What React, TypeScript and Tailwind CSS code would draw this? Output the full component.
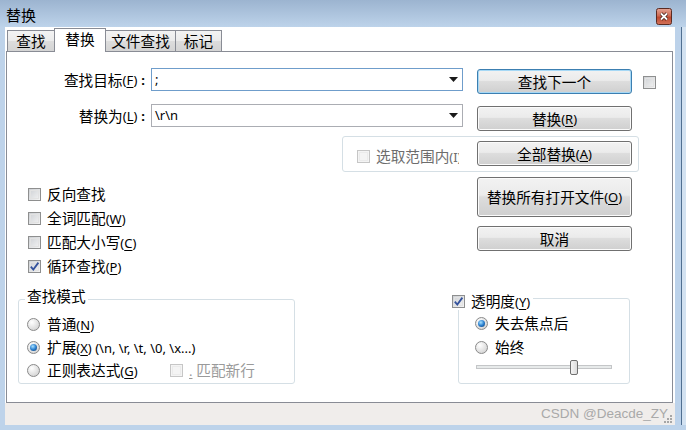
import React from 'react';

const Mn = ({ k }: { k: string }) => (
  <span className="text-[13px]">
    (<span className="underline underline-offset-[2px]">{k}</span>)
  </span>
);

const Check = ({ checked = false, disabled = false }: { checked?: boolean; disabled?: boolean }) => (
  <span
    className={`relative flex h-[13px] w-[13px] shrink-0 items-center justify-center border ${
      disabled
        ? 'border-[#c6c6c6] bg-[#f4f4f4]'
        : 'border-[#8e8f8f] bg-[linear-gradient(135deg,#cdd0d4,#f4f4f4)]'
    }`}
  >
    <span className={`absolute inset-[1px] border ${disabled ? 'border-[#ebebeb]' : 'border-[#e2e2e2]'}`} />
    {checked && (
      <svg width="11" height="11" viewBox="0 0 11 11" className="relative">
        <path d="M1.8 5.6 L4.3 8.6 L9.4 1.6" fill="none" stroke="#34529c" strokeWidth="1.8" />
      </svg>
    )}
  </span>
);

const Radio = ({ checked = false }: { checked?: boolean }) => (
  <span className="flex h-[13px] w-[13px] shrink-0 items-center justify-center rounded-full border border-[#8a8a8a] bg-[radial-gradient(circle_at_35%_30%,#ffffff,#dadada_70%,#c6c6c6)]">
    {checked && (
      <span className="h-[7px] w-[7px] rounded-full bg-[radial-gradient(circle_at_40%_35%,#a8e2ff,#2b80d0_50%,#0b3566)]" />
    )}
  </span>
);

const Btn = ({ children, className = '', def = false }: { children: React.ReactNode; className?: string; def?: boolean }) => (
  <div
    className={`flex shrink-0 items-center justify-center whitespace-nowrap rounded-[3px] border bg-[linear-gradient(#f2f2f2_0%,#ebebeb_45%,#dddddd_50%,#cfcfcf_100%)] ${
      def ? 'border-[#3c7fb1] shadow-[inset_0_0_0_1px_#a6d8f5]' : 'border-[#707070] shadow-[inset_0_0_0_1px_#fbfbfb]'
    } ${className}`}
  >
    {children}
  </div>
);

const Combo = ({ value, focus = false }: { value: string; focus?: boolean }) => (
  <div
    className={`ml-[6px] flex h-[23px] w-[312px] shrink-0 items-center border bg-white ${
      focus ? 'border-[#6f9dcb]' : 'border-[#abadb3]'
    }`}
  >
    <span className="pl-[3px] text-[13px] leading-none">{value}</span>
    <svg className="ml-auto mr-[4px]" width="9" height="5" viewBox="0 0 9 5">
      <path d="M0 0H9L4.5 5Z" fill="#1a1a1a" />
    </svg>
  </div>
);

const Tab = ({ label, className = '' }: { label: string; className?: string }) => (
  <div
    className={`-ml-px flex h-[21px] items-center justify-center border border-b-0 border-[#898c95] bg-[linear-gradient(#f3f3f3,#ebebeb_50%,#dddddd_50%,#d4d4d4)] ${className}`}
  >
    {label}
  </div>
);

const CloseButton = () => (
  <svg className="ml-auto mt-[8px]" width="16" height="17" viewBox="0 0 16 17">
    <defs>
      <linearGradient id="cb" x1="0" y1="0" x2="0" y2="1">
        <stop offset="0" stopColor="#e4a596" />
        <stop offset="0.45" stopColor="#cf6a52" />
        <stop offset="0.55" stopColor="#bf4a31" />
        <stop offset="1" stopColor="#d2735a" />
      </linearGradient>
    </defs>
    <rect x="0.5" y="0.5" width="15" height="16" rx="2" fill="url(#cb)" stroke="#5b2b22" />
    <path d="M5 5.5 L11 11.5 M11 5.5 L5 11.5" stroke="#3a1a14" strokeWidth="3.2" />
    <path d="M5 5.5 L11 11.5 M11 5.5 L5 11.5" stroke="#ffffff" strokeWidth="1.8" />
  </svg>
);

export default function App() {
  return (
    <div className="flex h-[430px] w-[686px] flex-col overflow-hidden bg-[#bdd3ea] font-['Noto_Sans','Noto_Sans_CJK_SC',sans-serif] text-[14.67px] leading-[18px] text-black">
      {/* title bar */}
      <div className="flex h-[27px] shrink-0 items-start bg-[linear-gradient(#9cb4d0,#bdd3ea)] pl-[6px] pr-[14px]">
        <span className="mt-[5px] text-[15px] leading-[20px]">替换</span>
        <CloseButton />
      </div>

      <div className="flex min-h-0 flex-1">
        <div className="w-[5px] bg-[#bed3ea]" />
        <div className="flex w-[670px] flex-col bg-white">
          {/* tabs */}
          <div className="flex h-[24px] shrink-0 items-end pl-[3px]">
            <Tab label="查找" className="w-[48px]" />
            <div className="relative z-10 -mb-px -ml-px flex h-[24px] w-[52px] justify-center border border-b-0 border-[#898c95] bg-white pt-[1px]">
              替换
            </div>
            <Tab label="文件查找" className="w-[71px]" />
            <Tab label="标记" className="w-[47px]" />
          </div>

          {/* panel */}
          <div className="ml-[1px] flex h-[352px] w-[667px] shrink-0 flex-col border border-[#898c95] bg-white">
            {/* row 1 */}
            <div className="mt-[16px] flex items-start">
              <div className="flex h-[23px] w-[138px] items-center justify-end whitespace-nowrap">
                查找目标<Mn k="F" />
                <span className="ml-[4px] text-[13px] font-bold">:</span>
              </div>
              <Combo value=";" focus />
              <Btn def className="ml-[14px] mt-[1px] h-[25px] w-[155px]">
                查找下一个
              </Btn>
              <div className="ml-[11px] mt-[8px]">
                <Check />
              </div>
            </div>

            {/* row 2 */}
            <div className="mt-[10px] flex items-start">
              <div className="flex h-[23px] w-[138px] items-center justify-end whitespace-nowrap">
                替换为<Mn k="L" />
                <span className="ml-[4px] text-[13px] font-bold">:</span>
              </div>
              <Combo value="\r\n" />
              <Btn className="ml-[14px] mt-[2px] h-[25px] w-[155px]">
                替换<Mn k="R" />
              </Btn>
            </div>

            {/* row 3: in-selection group */}
            <div className="ml-[335px] mt-[5px] flex h-[36px] w-[297px] items-start rounded-[3px] border border-[#d5dfe5]">
              <div className="mt-[10px] flex w-[116px] items-center gap-[6px] overflow-hidden whitespace-nowrap pl-[14px] text-[#6d6d6d]">
                <Check disabled />
                <span>
                  选取范围内<span className="text-[13px]">(I)</span>
                </span>
              </div>
              <Btn className="ml-[18px] mt-[4px] h-[25px] w-[155px]">
                全部替换<Mn k="A" />
              </Btn>
            </div>

            {/* options + side buttons */}
            <div className="flex items-start">
              <div className="ml-[21px] mt-[10px] flex w-[449px] flex-col">
                <div className="flex h-[24px] items-center gap-[6px]">
                  <Check />
                  <span>反向查找</span>
                </div>
                <div className="flex h-[24px] items-center gap-[6px]">
                  <Check />
                  <span>
                    全词匹配<Mn k="W" />
                  </span>
                </div>
                <div className="flex h-[24px] items-center gap-[6px]">
                  <Check />
                  <span>
                    匹配大小写<Mn k="C" />
                  </span>
                </div>
                <div className="flex h-[24px] items-center gap-[6px]">
                  <Check checked />
                  <span>
                    循环查找<Mn k="P" />
                  </span>
                </div>
              </div>
              <div className="mt-[5px] flex flex-col">
                <Btn className="h-[40px] w-[155px]">
                  替换所有打开文件<Mn k="O" />
                </Btn>
                <Btn className="mt-[9px] h-[25px] w-[155px]">取消</Btn>
              </div>
            </div>

            {/* bottom groups */}
            <div className="mt-[20px] flex items-start">
              <div className="relative ml-[11px] mt-[1px] flex h-[85px] w-[277px] flex-col rounded-[3px] border border-[#d5dfe5] pl-[8px] pt-[12px]">
                <span className="absolute left-[6px] top-[-13px] bg-white px-[2px]">查找模式</span>
                <div className="flex h-[24px] items-center gap-[7px]">
                  <Radio />
                  <span>
                    普通<Mn k="N" />
                  </span>
                </div>
                <div className="flex h-[23px] items-center gap-[7px]">
                  <Radio checked />
                  <span className="whitespace-nowrap">
                    扩展<Mn k="X" />
                    <span className="text-[13px]"> (\n, \r, \t, \0, \x...)</span>
                  </span>
                </div>
                <div className="flex h-[23px] items-center">
                  <Radio />
                  <span className="ml-[7px] w-[116px] whitespace-nowrap">
                    正则表达式<Mn k="G" />
                  </span>
                  <span className="ml-[7px]">
                    <Check disabled />
                  </span>
                  <span className="ml-[6px] whitespace-nowrap text-[#9a9a9a]">
                    <span className="text-[13px] underline underline-offset-[2px]">.</span> 匹配新行
                  </span>
                </div>
              </div>

              <div className="relative ml-[163px] flex h-[86px] w-[172px] flex-col rounded-[3px] border border-[#d5dfe5] pl-[16px] pt-[12px]">
                <div className="absolute left-[-7px] top-[-7px] flex h-[18px] items-center gap-[6px] bg-white pr-[3px]">
                  <Check checked />
                  <span>
                    透明度<Mn k="Y" />
                  </span>
                </div>
                <div className="flex h-[24px] items-center gap-[7px]">
                  <Radio checked />
                  <span>失去焦点后</span>
                </div>
                <div className="flex h-[24px] items-center gap-[7px]">
                  <Radio />
                  <span>始终</span>
                </div>
                <div className="relative ml-[1px] flex h-[16px] w-[136px] items-center">
                  <div className="h-[4px] w-full border border-[#c4c6c8] bg-[#e7eaea]" />
                  <div className="absolute left-[94px] top-[1px] h-[15px] w-[8px] rounded-[2px] border border-[#707070] bg-[linear-gradient(90deg,#f4f4f4,#dcdcdc)]" />
                </div>
              </div>
            </div>
          </div>

          {/* status bar */}
          <div className="relative flex h-[22px] shrink-0 items-center justify-end bg-[#f0edeb] pr-[7px]">
            <span className="font-['Liberation_Sans',sans-serif] text-[13.5px] leading-none text-[#a9a9a9]">
              CSDN @Deacde_ZY
            </span>
            <svg className="absolute bottom-[1px] right-[2px]" width="10" height="10" viewBox="0 0 10 10">
              <g fill="#a6a6a6">
                <rect x="7" y="1" width="2" height="2" />
                <rect x="4" y="4" width="2" height="2" />
                <rect x="7" y="4" width="2" height="2" />
                <rect x="1" y="7" width="2" height="2" />
                <rect x="4" y="7" width="2" height="2" />
                <rect x="7" y="7" width="2" height="2" />
              </g>
            </svg>
          </div>
        </div>
        <div className="w-[6px] bg-[#bcd2ea]" />
        <div className="w-px bg-[#506f91]" />
        <div className="flex-1 bg-[#d3e2f1]" />
      </div>
      <div className="h-[5px] shrink-0 bg-[#bdd3ea]" />
    </div>
  );
}
